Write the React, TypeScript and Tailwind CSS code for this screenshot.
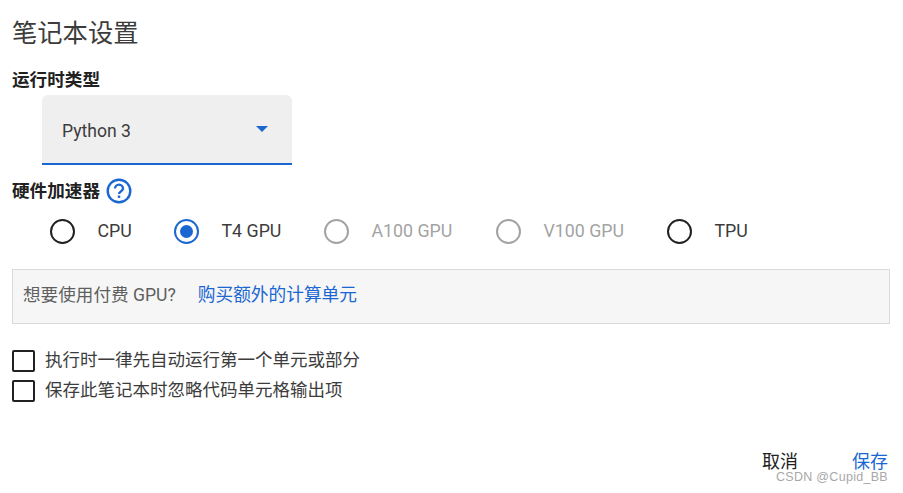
const fontStack = "font-['Roboto','Noto_Sans_CJK_SC',sans-serif]";

interface RadioProps {
  label: string;
  checked?: boolean;
  disabled?: boolean;
  width: string;
}

const Radio = ({ label, checked, disabled, width }: RadioProps) => (
  <div className={`flex items-center gap-[22.5px] ${width}`}>
    <div
      className={`flex h-[25px] w-[25px] shrink-0 items-center justify-center rounded-full border-2 ${
        checked ? 'border-[#1a67d2]' : disabled ? 'border-[#a3a3a3]' : 'border-[#212121]'
      }`}
    >
      {checked && <div className="h-[13px] w-[13px] rounded-full bg-[#1a67d2]"></div>}
    </div>
    <span className={`text-[17.8px] ${disabled ? 'text-[#a3a3a3]' : 'text-[#3c3c3c]'}`}>{label}</span>
  </div>
);

const Check = ({ label }: { label: string }) => (
  <div className="flex h-[23px] items-center gap-[10px]">
    <div className="h-[22px] w-[23px] rounded-[2px] border-2 border-[#212121]"></div>
    <span className="text-[17.5px] leading-[23px] text-[#3c3c3c]">{label}</span>
  </div>
);

export default function App() {
  return (
    <div className={`relative h-[493px] w-[903px] overflow-hidden bg-white pl-[12px] pr-[13px] ${fontStack}`}>
      <h2 className="pt-[17px] text-[25.3px] leading-[34px] text-[#3c3c3c]">笔记本设置</h2>
      <h3 className="mt-[17px] text-[17.6px] font-bold leading-[24px] text-[#212121]">运行时类型</h3>

      <div className="ml-[30px] mt-[3px] flex h-[70px] w-[250px] items-center justify-between rounded-t-[6px] border-b-2 border-[#1a67d2] bg-[#efefef] pl-[20px] pr-[24px] pt-[5px]">
        <span className="text-[17.6px] text-[#3c3c3c]">Python 3</span>
        <div className="mb-[5px] h-0 w-0 border-x-[6px] border-t-[6px] border-x-transparent border-t-[#1a67d2]"></div>
      </div>

      <div className="mt-[13px] flex h-[26px] items-center gap-[6px]">
        <h3 className="text-[17.6px] font-bold leading-[24px] text-[#212121]">硬件加速器</h3>
        <svg width="26" height="26" viewBox="0 0 26 26" fill="none">
          <circle cx="13" cy="13" r="11.3" stroke="#1a67d2" strokeWidth="2.4" />
          <path
            d="M9 10.6a4 4 0 0 1 8 0c0 2.6-4 2.9-4 5.4"
            stroke="#1a67d2"
            strokeWidth="2.4"
          />
          <rect x="11.8" y="17.5" width="2.4" height="2.4" fill="#1a67d2" />
        </svg>
      </div>

      <div className="ml-[38px] mt-[14px] flex h-[26px] items-center">
        <Radio label="CPU" width="w-[124px]" />
        <Radio label="T4 GPU" checked width="w-[150px]" />
        <Radio label="A100 GPU" disabled width="w-[172px]" />
        <Radio label="V100 GPU" disabled width="w-[171px]" />
        <Radio label="TPU" width="w-[100px]" />
      </div>

      <div className="mt-[25px] flex h-[55px] w-[878px] items-center border border-[#dadada] bg-[#f6f6f6] pb-[2px] pl-[10px]">
        <span className="text-[17.6px] text-[#5f5f5f]">想要使用付费 GPU?</span>
        <a className="ml-[22px] text-[17.7px] text-[#1a67d2]">购买额外的计算单元</a>
      </div>

      <div className="mt-[25px] flex flex-col gap-[7px]">
        <Check label="执行时一律先自动运行第一个单元或部分" />
        <Check label="保存此笔记本时忽略代码单元格输出项" />
      </div>

      <div className="mt-[47px] flex justify-end gap-[54px] pr-[2px]">
        <button className="text-[18px] leading-[26px] text-[#212121]">取消</button>
        <button className="text-[18px] leading-[26px] text-[#1a67d2]">保存</button>
      </div>

      <span className="absolute right-[15px] top-[470px] font-['Liberation_Sans',sans-serif] text-[12.5px] leading-[15px] tracking-[0.3px] text-[#a8a8a8]">
        CSDN @Cupid_BB
      </span>
    </div>
  );
}
